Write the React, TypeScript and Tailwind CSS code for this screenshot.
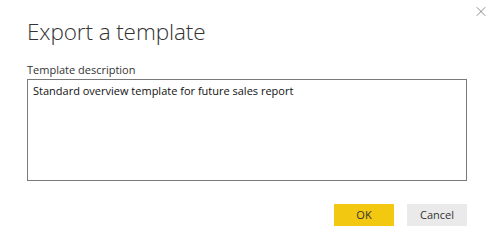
import { X } from 'lucide-react';

export default function App() {
  return (
    <div className="w-[494px] h-[252px] bg-white relative font-['Open_Sans','Noto_Sans',sans-serif] text-[#252423]">
      <button className="absolute left-[473px] top-[3px] w-[16px] h-[16px] flex items-center justify-center text-[#666]">
        <X size={17} strokeWidth={1.1} />
      </button>
      <div className="pl-[27px] pr-[27px] pt-[17px]">
        <h1 className="text-[22.5px] font-light leading-[30px] text-[#333] tracking-[-0.1px]">Export a template</h1>
        <label className="block mt-[15px] text-[11px] leading-[16px] text-[#333]">Template description</label>
        <div className="mt-[1px] h-[102px] border border-[#7a7a7a] px-[5px] pt-[3px] text-[11px] leading-[16px] text-[#111]">
          Standard overview template for future sales report
        </div>
        <div className="mt-[23px] flex justify-end gap-[13px]">
          <button className="w-[60px] h-[22px] bg-[#f2c811] text-[11px] text-[#333]">OK</button>
          <button className="w-[60px] h-[22px] bg-[#eaeaea] text-[11px] text-[#333]">Cancel</button>
        </div>
      </div>
    </div>
  );
}
